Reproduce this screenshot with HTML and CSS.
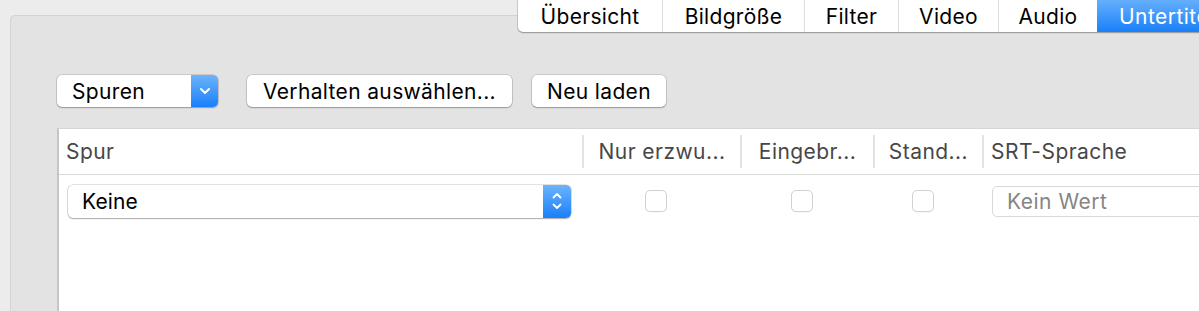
FILE: index.html
```html
<!DOCTYPE html>
<html lang="de">
<head>
<meta charset="utf-8">
<title>Untertitel</title>
<link rel="stylesheet" href="styles.css">
</head>
<body>
<div class="window">
  <div class="tabs">
    <div class="tab t1">Übersicht</div>
    <div class="tab t2">Bildgröße</div>
    <div class="tab t3">Filter</div>
    <div class="tab t4">Video</div>
    <div class="tab t5">Audio</div>
    <div class="tab t6 active">Untertitel</div>
  </div>
  <div class="panel">
    <div class="toolbar">
      <div class="popup spuren">
        <span class="popup-label">Spuren</span>
        <span class="popup-arrow">
          <svg width="12" height="8" viewBox="0 0 12 8"><path d="M2 2 L6 6 L10 2" fill="none" stroke="#fff" stroke-width="2" stroke-linecap="round" stroke-linejoin="round"/></svg>
        </span>
      </div>
      <div class="button verhalten">Verhalten auswählen...</div>
      <div class="button neu">Neu laden</div>
    </div>
    <div class="table">
      <div class="thead">
        <div class="th left first">Spur</div>
        <div class="th center">Nur erzwu...</div>
        <div class="th center">Eingebr...</div>
        <div class="th center">Stand...</div>
        <div class="th left">SRT-Sprache</div>
      </div>
      <div class="trow">
        <div class="td">
          <div class="popup keine">
            <span class="popup-label">Keine</span>
            <span class="popup-arrow updown">
              <svg width="10" height="18" viewBox="0 0 10 18"><path d="M1.5 5.5 L5 2 L8.5 5.5" fill="none" stroke="#fff" stroke-width="1.8" stroke-linecap="round" stroke-linejoin="round"/><path d="M1.5 12.5 L5 16 L8.5 12.5" fill="none" stroke="#fff" stroke-width="1.8" stroke-linecap="round" stroke-linejoin="round"/></svg>
            </span>
          </div>
        </div>
        <div class="td check"><span class="checkbox"></span></div>
        <div class="td check"><span class="checkbox"></span></div>
        <div class="td check"><span class="checkbox"></span></div>
        <div class="td"><div class="combo">Kein Wert</div></div>
      </div>
    </div>
  </div>
</div>
</body>
</html>
```
FILE: styles.css
```css
html, body {
  margin: 0;
  padding: 0;
}
body {
  width: 1199px;
  height: 311px;
  overflow: hidden;
  background: #ececec;
  font-family: Inter, "Liberation Sans", Arial, sans-serif;
  color: #000;
}
.window {
  padding-left: 10px;
  width: 1400px;
}
.tabs {
  display: flex;
  margin: -3px 0 0 508px;
  height: 35px;
  width: max-content;
  background: #fff;
  border-radius: 5px;
  box-shadow: 0 0 0 1px rgba(0,0,0,0.10), 0 1px 1.5px rgba(0,0,0,0.28);
  position: relative;
  z-index: 1;
  overflow: hidden;
}
.tab {
  display: flex;
  align-items: center;
  justify-content: center;
  padding-top: 3px;
  box-sizing: border-box;
  font-size: 21px;
  font-weight: 440;
  letter-spacing: 0.3px;
  color: #000;
  border-left: 1px solid #dedede;
}
.t1 { width: 144px; border-left: none; }
.t2 { width: 142px; }
.t3 { width: 94px; }
.t4 { width: 100px; }
.t5 { width: 99px; }
.t6 { width: 142px; }
.tab.active {
  background: linear-gradient(#6cb4fc, #1a7ffa);
  color: #fff;
  font-weight: 400;
  letter-spacing: 0.45px;
  border-left: none;
  justify-content: flex-start;
  padding-left: 22px;
}
.panel {
  margin-top: -17px;
  height: 400px;
  background: #e3e3e3;
  border: 1px solid #d3d3d3;
  border-right: none;
  border-radius: 5px 0 0 0;
  padding: 59px 0 0 46px;
  box-sizing: border-box;
}
.toolbar {
  display: flex;
  align-items: center;
  height: 32px;
}
.button, .popup {
  height: 32px;
  box-sizing: border-box;
  background: #fff;
  border-radius: 5px;
  box-shadow: 0 0 0 0.5px rgba(0,0,0,0.22), 0 1px 1.5px rgba(0,0,0,0.25);
  font-size: 21px;
  font-weight: 440;
  letter-spacing: 0.35px;
  color: #000;
  display: flex;
  align-items: center;
}
.button {
  justify-content: center;
}
.spuren {
  width: 161px;
}
.verhalten {
  width: 265px;
  margin-left: 29px;
}
.neu {
  width: 134px;
  margin-left: 20px;
}
.popup-label {
  flex: 1;
  padding-left: 15px;
}
.popup-arrow {
  width: 27px;
  height: 100%;
  background: linear-gradient(#6cb4fc, #1a7ffa);
  border-radius: 0 5px 5px 0;
  display: flex;
  align-items: center;
  justify-content: center;
}
.table {
  margin-top: 21px;
  width: 1200px;
  height: 300px;
  background: #fff;
  border-left: 2px solid #c6c6c6;
  border-top: 1px solid #d6d6d6;
}
.thead, .trow {
  display: grid;
  grid-template-columns: 523px 158px 133px 109px 1fr;
}
.thead {
  height: 46px;
  align-items: center;
  border-bottom: 1px solid #dadada;
  box-sizing: border-box;
}
.th {
  height: 33px;
  display: flex;
  align-items: center;
  font-size: 21px;
  letter-spacing: 0.45px;
  color: #474747;
  border-left: 2px solid #e2e2e2;
  box-sizing: border-box;
}
.th.first {
  border-left: none;
}
.th.left {
  padding-left: 7px;
}
.th.center {
  justify-content: center;
}
.trow {
  height: 52px;
  align-items: center;
}
.td {
  display: flex;
  align-items: center;
}
.keine {
  margin-left: 9px;
  width: 503px;
  height: 33px;
  font-size: 21px;
  letter-spacing: 0.15px;
}
.keine .popup-label {
  padding-left: 14px;
}
.keine .popup-arrow {
  width: 28px;
}
.check {
  justify-content: center;
  padding-right: 10px;
}
.checkbox {
  width: 22px;
  height: 22px;
  box-sizing: border-box;
  border: 1px solid #d2d2d2;
  border-radius: 5px;
  background: #fff;
  box-shadow: 0 0.5px 0.5px rgba(0,0,0,0.06);
}
.combo {
  margin-left: 10px;
  width: 260px;
  height: 31px;
  box-sizing: border-box;
  border: 1px solid #d9d9d9;
  border-radius: 5px;
  display: flex;
  align-items: center;
  padding-left: 14px;
  font-size: 21px;
  letter-spacing: 0.5px;
  color: #858585;
}
```
